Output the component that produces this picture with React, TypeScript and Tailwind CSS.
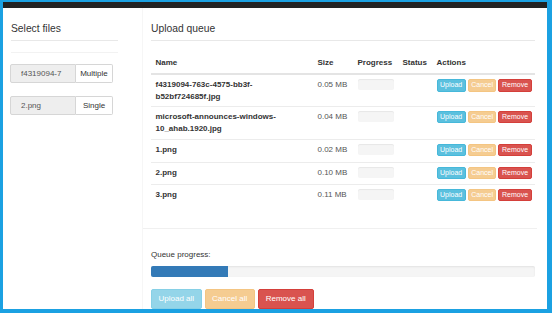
import React from "react";

const files = [
  { name: "f4319094-763c-4575-bb3f-b52bf724685f.jpg", size: "0.05 MB", h: "h-[32px]" },
  { name: "microsoft-announces-windows-10_ahab.1920.jpg", size: "0.04 MB", h: "h-[33px]" },
  { name: "1.png", size: "0.02 MB", h: "h-[23px]" },
  { name: "2.png", size: "0.10 MB", h: "h-[22px]" },
  { name: "3.png", size: "0.11 MB", h: "h-[23px]" },
];

function InputGroup({ value, label }: { value: string; label: string }) {
  return (
    <div className="flex h-[19px] w-[103px]">
      <div className="w-[66px] shrink-0 h-full bg-[#eeeeee] border border-[#d6d6d6] rounded-l-[2px] pl-[10px] pr-[6px]">
        <div className="w-full h-full overflow-hidden whitespace-nowrap text-[8px] leading-[17px] text-[#555]">{value}</div>
      </div>
      <div className="w-[37px] shrink-0 h-full bg-white border border-l-0 border-[#d6d6d6] rounded-r-[2px] flex items-center justify-center text-[8px] leading-[17px] text-[#333] whitespace-nowrap">
        {label}
      </div>
    </div>
  );
}

function SmallBtn({ label, color, faded }: { label: string; color: string; faded?: boolean }) {
  return (
    <span
      className={`inline-block h-[12.5px] px-[2.5px] border rounded-[2px] text-white text-[7px] leading-[10.5px] ${color} ${faded ? "opacity-[0.62]" : ""}`}
    >
      {label}
    </span>
  );
}

export default function App() {
  return (
    <div className="w-[552px] h-[313px] bg-[#1ba1e2] pl-[3px] pr-[5px] pt-[2px] pb-[4px] font-['Liberation_Sans',Arial,Helvetica,sans-serif] text-[#333]">
      <div className="w-full h-full bg-white flex flex-col overflow-hidden">
        <div className="h-[6px] bg-[#222222] shrink-0" />
        <div className="flex flex-1 min-h-0">
          {/* Left column */}
          <div className="w-[139px] shrink-0 pl-[8px] pr-[24px]">
            <div className="pt-[15px] pb-[5px] border-b border-[#e8e8e8] text-[10.3px] leading-[12px]">Select files</div>
            <div className="mt-[11px] h-px bg-[#f2f2f2]" />
            <div className="mt-[11px] -ml-[1px]">
              <InputGroup value="f4319094-7" label="Multiple" />
            </div>
            <div className="mt-[13px] -ml-[1px]">
              <InputGroup value="2.png" label="Single" />
            </div>
          </div>

          {/* Right column */}
          <div className="flex-1 border-l border-[#f6f6f6] pl-[8px] pr-[12px] flex flex-col">
            <div className="pt-[15px] pb-[5px] border-b border-[#e8e8e8] text-[10.3px] leading-[12px]">Upload queue</div>

            <table className="mt-[11px] w-[384px] table-fixed border-collapse text-[8px] leading-[12px]">
              <colgroup>
                <col className="w-[162px]" />
                <col className="w-[40px]" />
                <col className="w-[45px]" />
                <col className="w-[34px]" />
                <col className="w-[103px]" />
              </colgroup>
              <thead>
                <tr className="h-[22px]">
                  <th className="text-left font-bold px-[4.5px] align-middle border-b-2 border-[#e4e4e4]">Name</th>
                  <th className="text-left font-bold px-[4.5px] align-middle border-b-2 border-[#e4e4e4]">Size</th>
                  <th className="text-left font-bold px-[4.5px] align-middle border-b-2 border-[#e4e4e4]">Progress</th>
                  <th className="text-left font-bold px-[4.5px] align-middle border-b-2 border-[#e4e4e4]">Status</th>
                  <th className="text-left font-bold px-[4.5px] align-middle border-b-2 border-[#e4e4e4]">Actions</th>
                </tr>
              </thead>
              <tbody>
                {files.map((f, i) => (
                  <tr key={i} className={f.h}>
                    <td className={`align-top px-[4.5px] pt-[4px] font-bold break-words ${i === 0 ? "" : "border-t border-[#ececec]"}`}>{f.name}</td>
                    <td className={`align-top px-[4.5px] pt-[4px] text-[#555] whitespace-nowrap ${i === 0 ? "" : "border-t border-[#ececec]"}`}>{f.size}</td>
                    <td className={`align-top px-[4.5px] pt-[4px] ${i === 0 ? "" : "border-t border-[#ececec]"}`}>
                      <div className="w-[36px] h-[11px] bg-[#f5f5f5] rounded-[2px] shadow-[inset_0_1px_1px_rgba(0,0,0,0.06)]" />
                    </td>
                    <td className={`align-top px-[4.5px] pt-[4px] ${i === 0 ? "" : "border-t border-[#ececec]"}`} />
                    <td className={`align-top px-[4.5px] pt-[4px] whitespace-nowrap ${i === 0 ? "" : "border-t border-[#ececec]"}`}>
                      <div className="flex gap-[2px]">
                        <SmallBtn label="Upload" color="bg-[#5bc0de] border-[#46b8da]" />
                        <SmallBtn label="Cancel" color="bg-[#f0ad4e] border-[#eea236]" faded />
                        <SmallBtn label="Remove" color="bg-[#d9534f] border-[#d43f3a]" />
                      </div>
                    </td>
                  </tr>
                ))}
              </tbody>
            </table>

            <div className="mt-[21px] -ml-[8px] -mr-[2px] h-px bg-[#f0f0f0]" />
            <div className="mt-[20px] text-[8px] leading-[11px] text-[#333]">Queue progress:</div>
            <div className="mt-[6px] w-[384px] h-[11px] bg-[#f5f5f5] rounded-[2px] overflow-hidden shadow-[inset_0_1px_2px_rgba(0,0,0,0.08)]">
              <div className="h-full bg-[#337ab7]" style={{ width: "20%" }} />
            </div>
            <div className="mt-[12px] flex gap-[3px]">
              <span className="inline-block h-[20px] px-[6.5px] border border-[#46b8da] bg-[#5bc0de] opacity-[0.65] rounded-[2px] text-white text-[8px] leading-[18px]">Upload all</span>
              <span className="inline-block h-[20px] px-[6.5px] border border-[#eea236] bg-[#f0ad4e] opacity-[0.62] rounded-[2px] text-white text-[8px] leading-[18px]">Cancel all</span>
              <span className="inline-block h-[20px] px-[7px] border border-[#d43f3a] bg-[#d9534f] rounded-[2px] text-white text-[8px] leading-[18px]">Remove all</span>
            </div>
          </div>
        </div>
      </div>
    </div>
  );
}
